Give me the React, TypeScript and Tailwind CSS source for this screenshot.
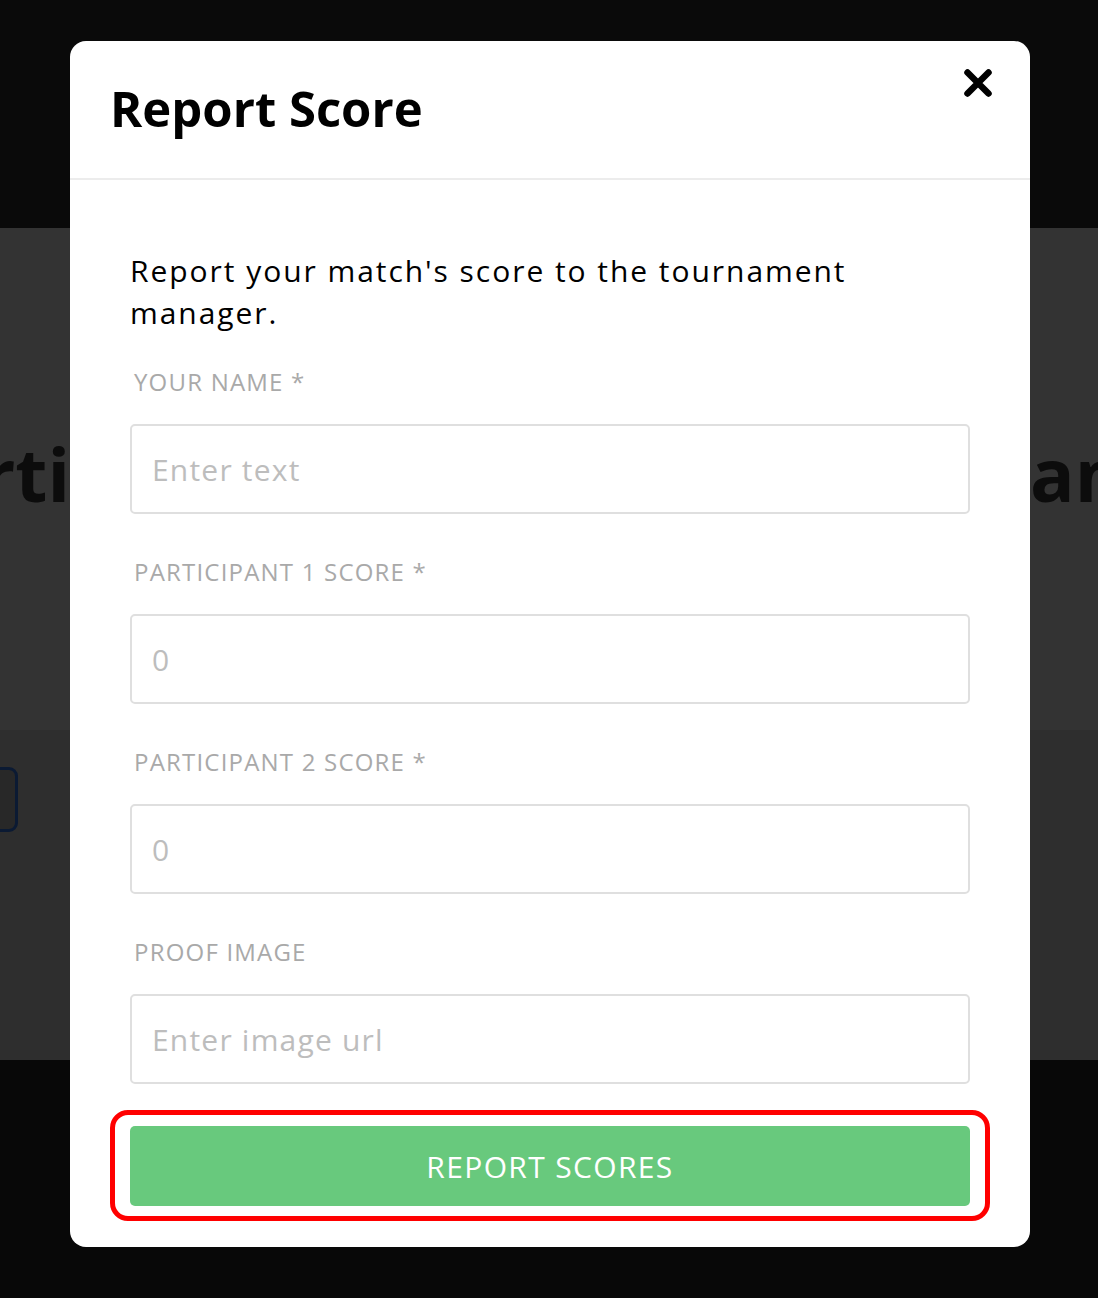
import React from "react";

const font = { fontFamily: '"Open Sans", "Noto Sans", sans-serif' };

function Field({ label, placeholder, first }: { label: string; placeholder: string; first?: boolean }) {
  return (
    <div className={first ? "mt-[33px]" : "mt-[43px]"}>
      <div className="pl-[4px] text-[24px] leading-[30px] tracking-[0.05em] text-[#a9a9a9] uppercase">{label}</div>
      <input
        type="text"
        placeholder={placeholder}
        className="mt-[27px] block w-full h-[90px] border-2 border-[#dfdfdf] rounded-[5px] px-[20px] text-[30px] tracking-[0.04em] text-[#333] placeholder:text-[#bdbdbd] outline-none bg-white"
        style={font}
      />
    </div>
  );
}

export default function App() {
  return (
    <div className="relative w-full h-[1298px] overflow-hidden flex flex-col bg-[#080808]" style={font}>
      {/* background page */}
      <div className="h-[228px] bg-[#0a0a0a] shrink-0" />
      <div className="h-[502px] bg-[#333333] shrink-0 pt-[196px]">
        <div className="flex whitespace-nowrap text-[74px] font-bold leading-[100px] text-[#0c0c0c]">
          <div className="w-[70px] shrink-0 overflow-hidden flex justify-end">
            <span>Parti</span>
          </div>
          <div className="w-[960px] shrink-0" />
          <div className="flex-1 overflow-hidden">
            <span>and Management</span>
          </div>
        </div>
      </div>
      <div className="h-[330px] bg-[#2e2e2e] shrink-0 pt-[37px]">
        <div className="-ml-[40px] w-[58px] h-[65px] border-[3px] border-[#0b1a33] rounded-[9px] bg-[#282828]" />
      </div>
      <div className="flex-1 bg-[#080808]" />

      {/* modal overlay */}
      <div className="absolute inset-0 pt-[41px] pl-[70px]">
        <div className="w-[960px] bg-white rounded-[16px] flex flex-col">
          <div className="relative h-[139px] px-[40px] flex items-center border-b-2 border-[#ececec]">
            <h2 className="text-[49px] font-bold leading-none text-black -mt-[2px]">Report Score</h2>
            <button className="absolute top-[28px] right-[38px] w-[28px] h-[28px]" aria-label="Close">
              <svg width="28" height="28" viewBox="0 0 28 28">
                <path d="M3.5 3.5 L24.5 24.5 M24.5 3.5 L3.5 24.5" stroke="#000" strokeWidth="6.5" strokeLinecap="round" />
              </svg>
            </button>
          </div>
          <div className="px-[60px] pt-[70px] pb-[41px] flex flex-col">
            <p className="text-[30px] leading-[42px] tracking-[0.065em] text-black">
              Report your match's score to the tournament manager.
            </p>
            <Field first label="Your Name *" placeholder="Enter text" />
            <Field label="Participant 1 Score *" placeholder="0" />
            <Field label="Participant 2 Score *" placeholder="0" />
            <Field label="Proof Image" placeholder="Enter image url" />
            <div className="relative mt-[42px]">
              <button className="w-full h-[80px] bg-[#68c97d] rounded-[5px] text-white text-[30px] tracking-[0.045em] uppercase">
                Report Scores
              </button>
              <div className="pointer-events-none absolute -top-[16px] -bottom-[15px] -left-[20px] -right-[20px] border-[5px] border-[#ff0000] rounded-[18px]" />
            </div>
          </div>
        </div>
      </div>
    </div>
  );
}
